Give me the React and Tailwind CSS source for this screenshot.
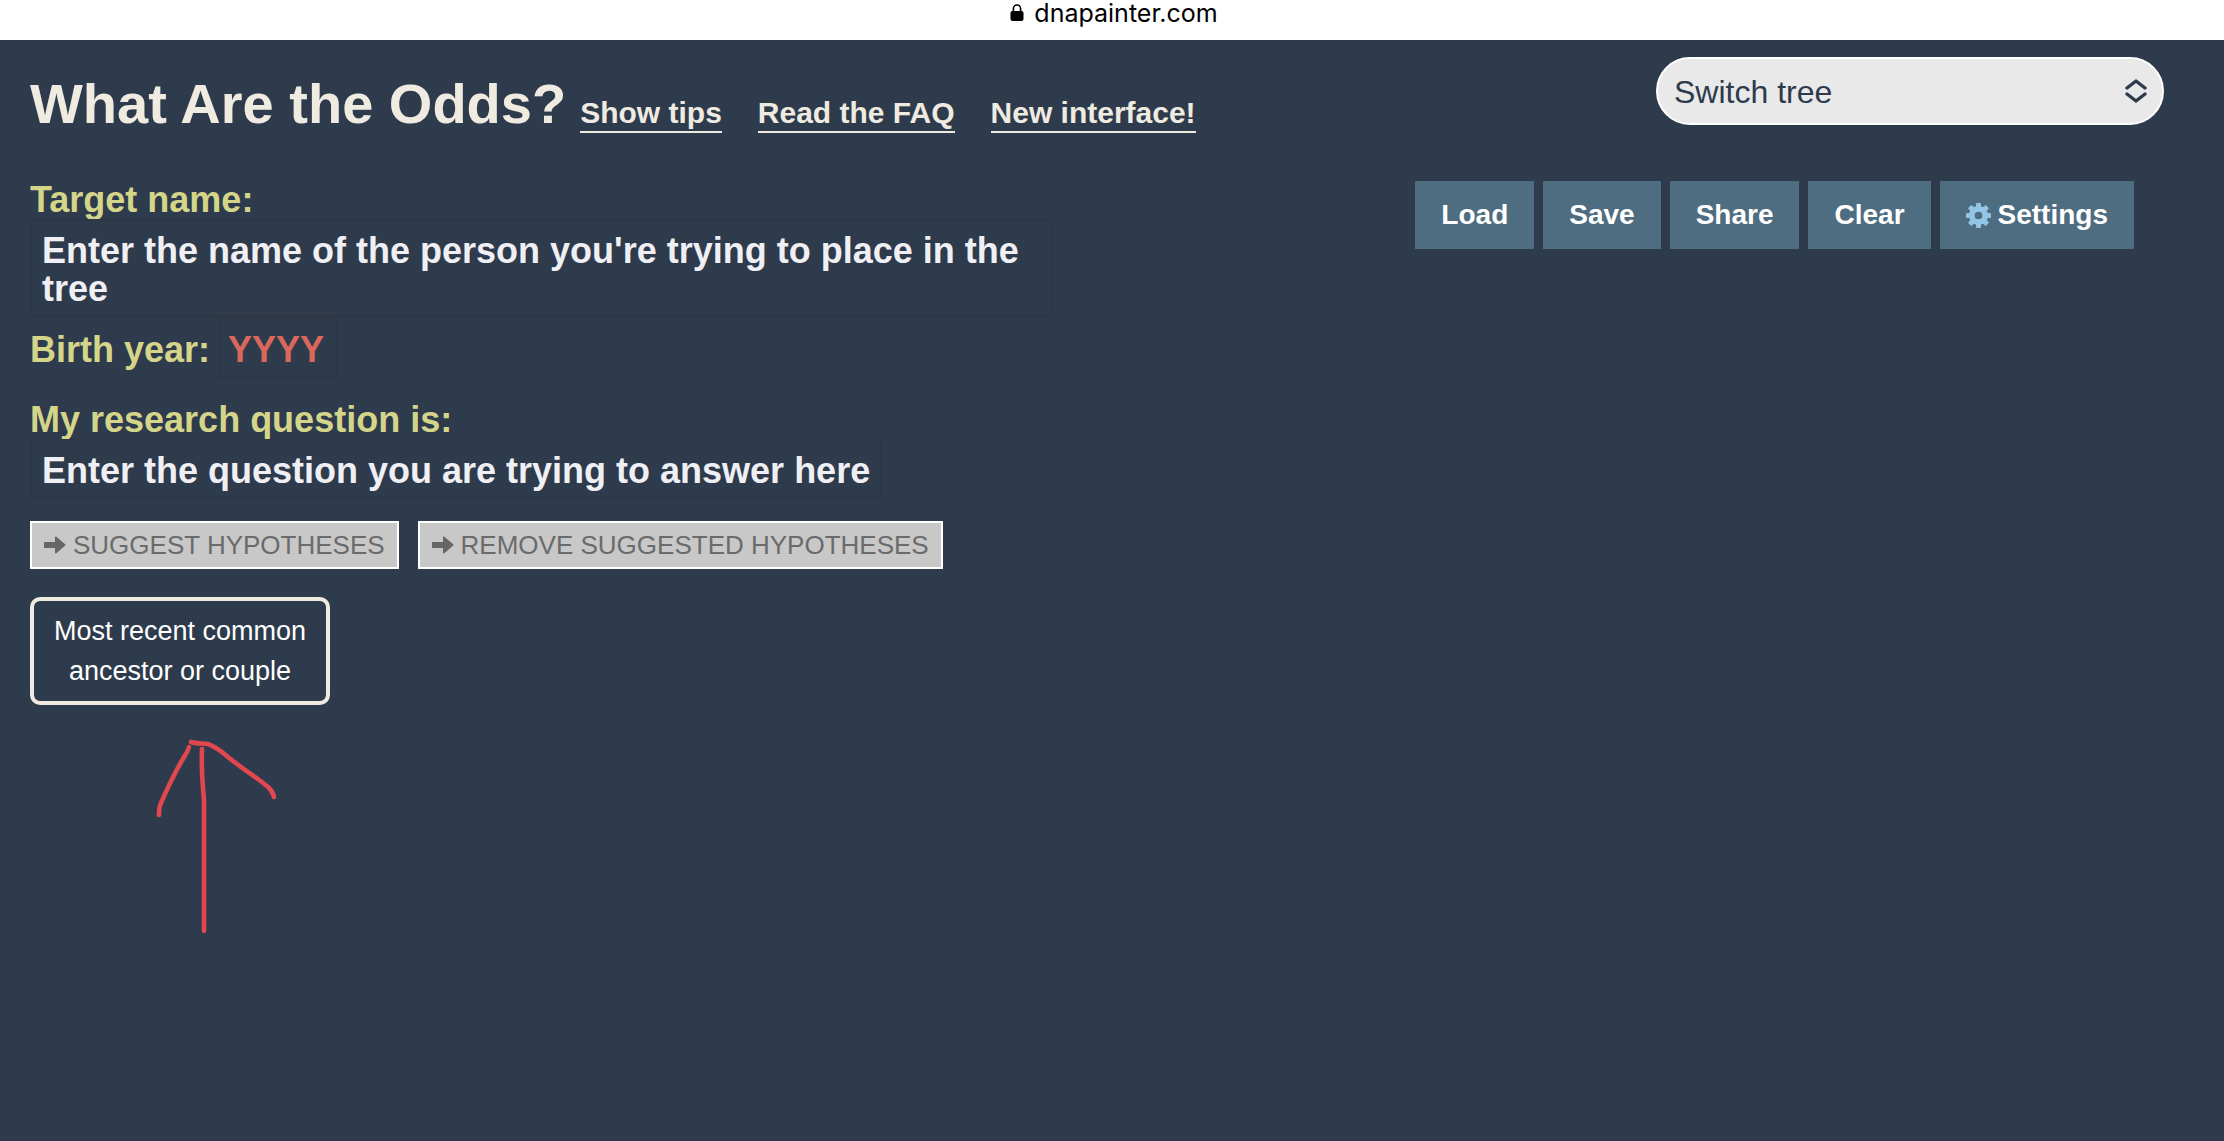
import React, { useState } from 'react';

const links = [
  { label: 'Show tips', href: '#tips' },
  { label: 'Read the FAQ', href: '#faq' },
  { label: 'New interface!', href: '#new' },
];

const actions = ['Load', 'Save', 'Share', 'Clear'];

const gearTeeth = [0, 45, 90, 135, 180, 225, 270, 315];

function LockIcon() {
  return (
    <svg width="14" height="17" viewBox="0 0 14 17" aria-hidden="true">
      <rect x="0.5" y="7" width="13" height="10" rx="2" fill="#000" />
      <path d="M3.4 8V4.6a3.6 3.6 0 0 1 7.2 0V8" fill="none" stroke="#000" strokeWidth="1.6" />
    </svg>
  );
}

function GearIcon() {
  return (
    <svg width="25" height="25" viewBox="0 0 24 24" fill="#93c5e6" aria-hidden="true">
      {gearTeeth.map(angle => (
        <path key={angle} d="M9.3 5 9.8 0h4.4l.5 5z" transform={`rotate(${angle} 12 12)`} />
      ))}
      <circle cx="12" cy="12" r="6.4" fill="none" stroke="#93c5e6" strokeWidth="5.4" />
    </svg>
  );
}

function ArrowIcon() {
  return (
    <svg width="22" height="18" viewBox="0 0 22 18" fill="#666" aria-hidden="true">
      <path d="M1 6h10V1.4c0-.9.7-1.2 1.4-.6l8.8 7.4c.5.4.5 1 0 1.4l-8.8 7.6c-.7.6-1.4.3-1.4-.6V12H1c-.7 0-1-.3-1-1V7c0-.7.3-1 1-1z" />
    </svg>
  );
}

function HypothesisButton({ children }) {
  return (
    <button
      type="button"
      className="flex h-12 items-center gap-[7px] border-2 border-white bg-[#c8c8c8] px-3 text-[26px] leading-none text-[#6b6b6b]"
    >
      <ArrowIcon />
      {children}
    </button>
  );
}

export default function App() {
  const [name, setName] = useState("Enter the name of the person you're trying to place in the tree");
  const [year, setYear] = useState('YYYY');
  const [question, setQuestion] = useState('Enter the question you are trying to answer here');

  return (
    <div className="flex min-h-screen flex-col bg-[#2e3b4c] font-['Liberation_Sans',Arial,sans-serif]">
      <div className="flex h-10 items-start justify-center gap-[10px] bg-white pl-1 text-black">
        <div className="pt-1">
          <LockIcon />
        </div>
        <span className="font-['Inter',sans-serif] text-[25px] leading-[26px]">dnapainter.com</span>
      </div>

      <header className="flex items-start justify-between pt-[17px] pr-[60px] pl-[30px]">
        <div className="flex items-baseline gap-[14px] pt-4 font-bold text-[#efebe0]">
          <h1 className="text-[56px] leading-[62px]">What Are the Odds?</h1>
          <nav className="flex gap-9 text-[30px] leading-9">
            {links.map(link => (
              <a key={link.label} href={link.href} className="border-b-2 border-[#efebe0]">
                {link.label}
              </a>
            ))}
          </nav>
        </div>
        <div className="relative w-[508px]">
          <select
            aria-label="Switch tree"
            className="h-[68px] w-full appearance-none rounded-full border-2 border-white bg-[#e9e9e9] px-4 pt-[2px] text-[32px] text-[#2e3b4c]"
          >
            <option>Switch tree</option>
          </select>
          <svg
            className="pointer-events-none absolute top-[22px] right-[17px]"
            width="22"
            height="24"
            viewBox="0 0 22 24"
            fill="none"
            stroke="#2e3b4c"
            strokeWidth="3.4"
            strokeLinecap="round"
            strokeLinejoin="round"
            aria-hidden="true"
          >
            <path d="M2 9 11 2l9 7M2 15l9 7 9-7" />
          </svg>
        </div>
      </header>

      <main className="flex items-start justify-between pt-[46px] pr-[90px] pl-[30px]">
        <div className="flex min-w-0 flex-col items-start">
          <form className="flex flex-col items-start text-4xl leading-[38px] font-bold text-[#efeff4]">
            <label htmlFor="target" className="leading-[38px] text-[#d5d58a]">Target name:</label>
            <textarea
              id="target"
              rows={2}
              value={name}
              onChange={e => setName(e.target.value)}
              className="block w-[1022px] max-w-full resize-none overflow-hidden border-2 border-[#2f3747] bg-[#2e3b4c] px-[10px] pt-[11px] pb-[7px] leading-[38px]"
            />
            <div className="flex items-baseline gap-2">
              <label htmlFor="year" className="leading-[38px] text-[#d5d58a]">Birth year:</label>
              <input
                id="year"
                value={year}
                onChange={e => setYear(e.target.value)}
                className="w-[120px] border-2 border-[#2f3747] bg-[#2e3b4c] px-2 pt-[11px] pb-[7px] leading-10 text-[#d9675b]"
              />
            </div>
            <label htmlFor="question" className="pt-[22px] leading-[38px] text-[#d5d58a]">
              My research question is:
            </label>
            <input
              id="question"
              value={question}
              onChange={e => setQuestion(e.target.value)}
              className="w-[852px] border-2 border-[#2f3747] bg-[#2e3b4c] pt-[10px] pr-2 pb-[6px] pl-[10px] leading-10"
            />
          </form>

          <div className="flex gap-[19px] pt-[22px]">
            <HypothesisButton>SUGGEST HYPOTHESES</HypothesisButton>
            <HypothesisButton>REMOVE SUGGESTED HYPOTHESES</HypothesisButton>
          </div>

          <button
            type="button"
            className="mt-7 w-[300px] rounded-[10px] border-4 border-[#efebe0] px-4 py-[10px] text-[27px] leading-10 text-white"
          >
            Most recent common ancestor or couple
          </button>

          <svg
            className="mt-8 ml-[124px]"
            width="126"
            height="200"
            viewBox="154 737 126 200"
            fill="none"
            stroke="#e0474f"
            strokeWidth="4.6"
            strokeLinecap="round"
            strokeLinejoin="round"
            aria-hidden="true"
          >
            <path d="M189 747C188 751 187 753 184 757C174 774 167 789 161 803C159 807 159 811 159 815" />
            <path d="M191 742C196 744 202 743 208 744C218 747 226 756 237 764C247 772 261 780 269 788Q273 792 274 797" />
            <path d="M202 749C201 773 203 787 204 800C204 845 204 890 204 931" />
          </svg>
        </div>

        <div className="flex shrink-0 gap-[9px] text-[28px] font-bold text-white">
          {actions.map(action => (
            <button key={action} type="button" className="h-[68px] bg-[#4f6d81] px-[26px]">
              {action}
            </button>
          ))}
          <button type="button" className="flex h-[68px] items-center gap-[7px] bg-[#4f6d81] px-[26px]">
            <GearIcon />
            Settings
          </button>
        </div>
      </main>
    </div>
  );
}
